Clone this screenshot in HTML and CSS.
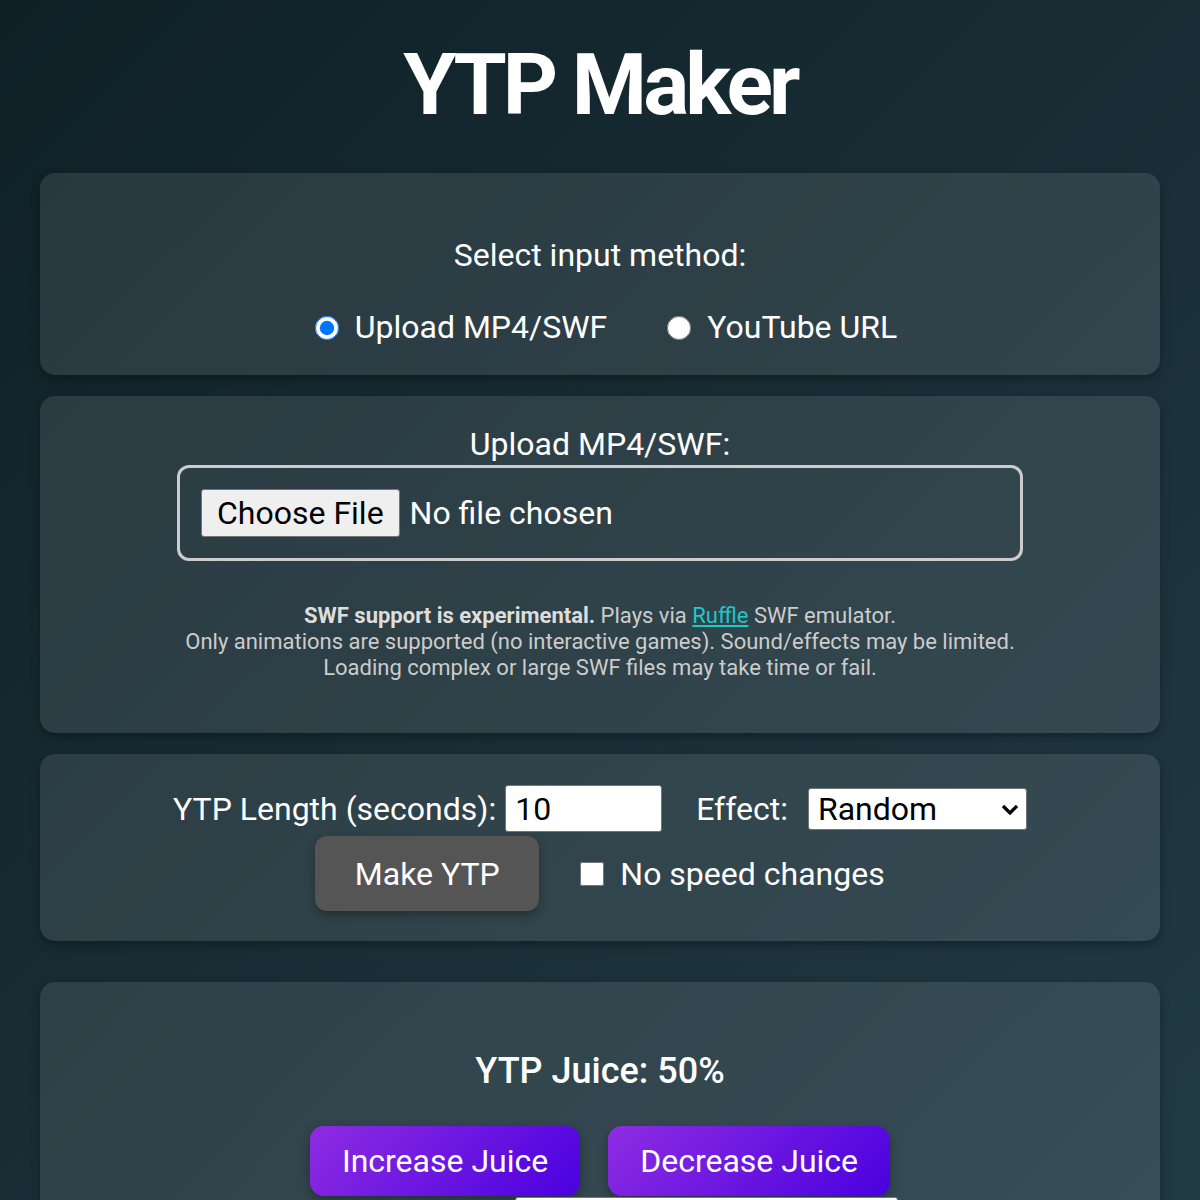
FILE: index.html
```html
<!DOCTYPE html>
<html lang="en">
<head>
	<meta charset="utf-8">
	<title>YTP Maker</title>
	<link rel="stylesheet" href="styles.css">
</head>
<body>
	<h1 class="title">YTP Maker</h1>

	<div class="card card-method">
		<p class="card-label">Select input method:</p>
		<div class="radio-row">
			<label class="radio"><input type="radio" name="method" checked> Upload MP4/SWF</label>
			<label class="radio"><input type="radio" name="method"> YouTube URL</label>
		</div>
	</div>

	<div class="card card-upload">
		<p class="upload-label">Upload MP4/SWF:</p>
		<div class="file-box">
			<input type="file" class="file-input" accept=".mp4,.swf">
		</div>
		<p class="notes">
			<strong>SWF support is experimental.</strong> Plays via <a href="#">Ruffle</a> SWF emulator.<br>
			Only animations are supported (no interactive games). Sound/effects may be limited.<br>
			Loading complex or large SWF files may take time or fail.
		</p>
	</div>

	<div class="card card-options">
		<div class="options-row">
			<label class="length-label">YTP Length (seconds):</label>
			<input type="number" class="length-input" value="10">
			<label class="effect-label">Effect:</label>
			<select class="effect-select">
				<option>Random</option>
			</select>
		</div>
		<div class="options-row">
			<button class="make-btn">Make YTP</button>
			<label class="check"><input type="checkbox"> No speed changes</label>
		</div>
	</div>

	<div class="card card-juice">
		<p class="juice-label">YTP Juice: 50%</p>
		<div class="juice-row">
			<button class="juice-btn">Increase Juice</button>
			<button class="juice-btn">Decrease Juice</button>
		</div>
		<div class="juice-extra">
			<div class="juice-box"></div>
		</div>
	</div>
</body>
</html>
```

FILE: styles.css
```css
html {
	background: #0f2027;
}
body {
	margin: 0;
	padding: 0 40px 40px;
	min-height: 1200px;
	box-sizing: border-box;
	font-family: Roboto, "Liberation Sans", sans-serif;
	font-size: 32px;
	color: #fff;
	background: linear-gradient(135deg, #0f2027 0%, #1a2f37 55%, #213c46 100%);
	text-align: center;
}
.title {
	margin: 0;
	padding: 35px 0 38px;
	font-size: 86px;
	line-height: 100px;
	font-weight: 700;
	letter-spacing: -3.9px;
}
.card {
	background: rgba(255, 255, 255, 0.1);
	border-radius: 15px;
	box-shadow: 0 4px 10px rgba(0, 0, 0, 0.3);
	padding: 20px;
	margin-bottom: 21px;
}
p {
	margin: 0;
}

/* input method */
.card-label {
	line-height: 37px;
	margin-top: 44px;
}
.radio-row {
	display: flex;
	justify-content: center;
	gap: 60px;
	margin: 35px 0 9px;
	padding-left: 12px;
	line-height: 37px;
}
.radio {
	display: flex;
	align-items: center;
}
.radio input {
	width: 24px;
	height: 24px;
	margin: 0 16px 0 0;
}

/* upload */
.upload-label {
	line-height: 37px;
	margin-top: 10px;
	margin-bottom: 2px;
}
.file-box {
	width: 846px;
	box-sizing: border-box;
	margin: 0 auto;
	border: 3px solid #ccc;
	border-radius: 12px;
	padding: 21px;
	text-align: left;
}
.file-input {
	font-family: Roboto, "Liberation Sans", sans-serif;
	font-size: 32px;
	color: #fff;
	line-height: 48px;
}
.file-input::file-selector-button {
	font-family: Roboto, "Liberation Sans", sans-serif;
	font-size: 32px;
	height: 48px;
	padding: 0 15px;
	margin-right: 10px;
	background: #efefef;
	color: #000;
	border: 1px solid #767676;
	border-radius: 3px;
}
.notes {
	margin: 42px 0 32px;
	font-size: 22px;
	line-height: 26px;
	color: #ccc;
}
.notes strong {
	color: #ddd;
}
.notes a {
	color: #1ec8c8;
}

/* options */
.card-options {
	padding: 31px 20px 30px;
	margin-bottom: 41px;
}
.options-row {
	display: flex;
	justify-content: center;
	align-items: center;
}
.options-row + .options-row {
	margin-top: 4px;
}
.length-input {
	width: 157px;
	height: 47px;
	box-sizing: border-box;
	margin-left: 9px;
	padding: 0 9px;
	font-family: Roboto, "Liberation Sans", sans-serif;
	font-size: 32px;
	border: 1px solid #767676;
	border-radius: 3px;
	background: #fff;
	color: #000;
}
.length-input::-webkit-inner-spin-button {
	-webkit-appearance: none;
}
.effect-label {
	margin-left: 34px;
}
.effect-select {
	-webkit-appearance: none;
	appearance: none;
	width: 219px;
	height: 42px;
	margin-left: 20px;
	padding: 0 9px;
	font-family: Roboto, "Liberation Sans", sans-serif;
	font-size: 32px;
	border: 1px solid #767676;
	border-radius: 3px;
	color: #000;
	background: #fff url("data:image/svg+xml,%3Csvg xmlns='http://www.w3.org/2000/svg' width='20' height='14' viewBox='0 0 20 14'%3E%3Cpath d='M3 4l7 7 7-7' fill='none' stroke='%23000' stroke-width='3.2'/%3E%3C/svg%3E") no-repeat right 6px center;
}
.make-btn {
	width: 224px;
	height: 75px;
	font-family: Roboto, "Liberation Sans", sans-serif;
	font-size: 32px;
	color: #fff;
	background: #555;
	border: none;
	border-radius: 12px;
	box-shadow: 0 4px 10px rgba(0, 0, 0, 0.3);
}
.check {
	display: flex;
	align-items: center;
	margin-left: 41px;
}
.check input {
	width: 24px;
	height: 24px;
	margin: 0 16px 0 0;
}

/* juice */
.juice-label {
	margin-top: 50px;
	font-size: 36px;
	font-weight: 500;
	line-height: 38px;
}
.juice-row {
	display: flex;
	justify-content: center;
	gap: 28px;
	margin-top: 36px;
}
.juice-btn {
	height: 70px;
	padding: 0 32px;
	font-family: Roboto, "Liberation Sans", sans-serif;
	font-size: 32px;
	color: #fff;
	background: linear-gradient(135deg, #8e2de2, #4a00e0);
	border: none;
	border-radius: 14px;
	box-shadow: 0 4px 10px rgba(0, 0, 0, 0.3);
}
.juice-extra {
	display: flex;
	justify-content: center;
	margin-top: 1px;
}
.juice-box {
	width: 381px;
	height: 60px;
	margin-left: 212px;
	background: #fff;
	border: 1px solid #767676;
	border-radius: 3px;
}
```
